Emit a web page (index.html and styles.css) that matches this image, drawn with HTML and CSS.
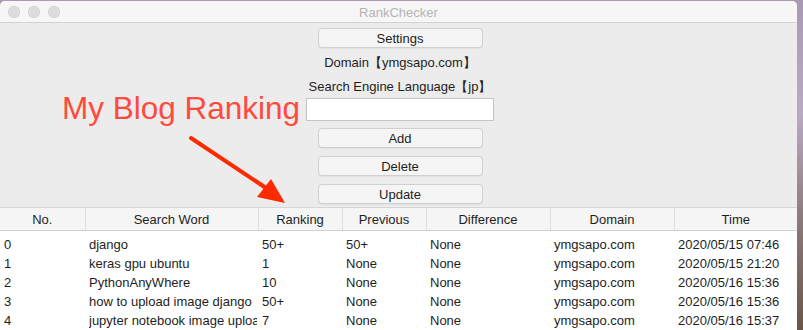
FILE: index.html
```html
<!DOCTYPE html>
<html>
<head>
<meta charset="utf-8">
<link rel="stylesheet" href="styles.css">
</head>
<body>
<div class="desk">
  <div class="window">
    <div class="titlebar">
      <div class="lights"><span></span><span></span><span></span></div>
      <div class="title">RankChecker</div>
    </div>
    <div class="content">
      <div class="controls">
        <button class="btn">Settings</button>
        <div class="label l1">Domain【ymgsapo.com】</div>
        <div class="label l2">Search Engine Language【jp】</div>
        <input class="entry" type="text">
        <button class="btn">Add</button>
        <button class="btn">Delete</button>
        <button class="btn last">Update</button>
      </div>
      <div class="annot">My Blog Ranking</div>
      <svg class="arrow" width="120" height="80" viewBox="0 0 120 80">
        <line x1="4" y1="4" x2="82" y2="56" stroke="#ff2a00" stroke-width="4" stroke-linecap="round"/>
        <polygon points="98,69 70,63 84,45" fill="#ff2a00"/>
      </svg>
      <div class="tablewrap">
        <table class="grid">
          <colgroup>
            <col class="c85"><col class="c173"><col class="c84"><col class="c84"><col class="c124"><col class="c124"><col class="c123">
          </colgroup>
          <thead>
            <tr><th>No.</th><th>Search Word</th><th>Ranking</th><th>Previous</th><th>Difference</th><th>Domain</th><th>Time</th></tr>
          </thead>
          <tbody>
            <tr class="first"><td>0</td><td>django</td><td>50+</td><td>50+</td><td>None</td><td>ymgsapo.com</td><td>2020/05/15 07:46</td></tr>
            <tr><td>1</td><td>keras gpu ubuntu</td><td>1</td><td>None</td><td>None</td><td>ymgsapo.com</td><td>2020/05/15 21:20</td></tr>
            <tr><td>2</td><td>PythonAnyWhere</td><td>10</td><td>None</td><td>None</td><td>ymgsapo.com</td><td>2020/05/16 15:36</td></tr>
            <tr><td>3</td><td><div class="clip">how to upload image django</div></td><td>50+</td><td>None</td><td>None</td><td>ymgsapo.com</td><td>2020/05/16 15:36</td></tr>
            <tr><td>4</td><td><div class="clip">jupyter notebook image upload</div></td><td>7</td><td>None</td><td>None</td><td>ymgsapo.com</td><td>2020/05/16 15:37</td></tr>
          </tbody>
        </table>
      </div>
    </div>
  </div>
</div>
</body>
</html>
```
FILE: styles.css
```css
html, body {
  margin: 0;
  padding: 0;
}
body {
  width: 803px;
  height: 330px;
  overflow: hidden;
  font-family: "Liberation Sans", Arial, sans-serif;
  font-size: 13px;
  color: #1e1e1e;
}
.desk {
  width: 803px;
  height: 330px;
  background: linear-gradient(180deg, #a999b4 0%, #b9a9c2 35%, #8d7c7e 65%, #6b5548 100%);
  padding-top: 1px;
  box-sizing: border-box;
}
.window {
  width: 797px;
  height: 329px;
  background: #ececec;
  border-radius: 5px 5px 0 0;
  overflow: hidden;
  display: flex;
  flex-direction: column;
}
.titlebar {
  height: 21px;
  background: #f6f6f6;
  border-bottom: 1px solid #d2d2d2;
  position: relative;
  display: flex;
  align-items: center;
  justify-content: center;
  flex-shrink: 0;
}
.lights {
  position: absolute;
  left: 8px;
  top: 5px;
  display: flex;
  gap: 8px;
}
.lights span {
  width: 12px;
  height: 12px;
  border-radius: 50%;
  background: #dcdcdc;
  box-shadow: inset 0 0 0 0.5px #cfcfcf;
}
.title {
  color: #b4b4b4;
  font-size: 13px;
  padding-top: 1px;
}
.content {
  position: relative;
  flex: 1;
  display: flex;
  flex-direction: column;
}
.controls {
  display: flex;
  flex-direction: column;
  align-items: center;
  padding-top: 5px;
  padding-left: 3px;
  flex-shrink: 0;
}
.btn {
  width: 165px;
  height: 20px;
  margin: 0 0 8px 0;
  padding: 0;
  border: 1px solid #d0d0d0;
  border-radius: 4px;
  background: #f5f5f5;
  font-family: inherit;
  font-size: 13px;
  color: #1e1e1e;
  box-shadow: 0 0.5px 0 rgba(0,0,0,0.08);
}
.btn.last {
  margin-bottom: 3px;
}
.label {
  height: 16px;
  line-height: 16px;
}
.l1 {
  margin-top: -1px;
  margin-bottom: 8px;
}
.l2 {
  margin-bottom: 3px;
}
.entry {
  width: 188px;
  height: 23px;
  box-sizing: border-box;
  border: 1px solid #c4c4c4;
  background: #ffffff;
  margin: 0 0 7px 0;
  padding: 0;
}
.annot {
  position: absolute;
  left: 62px;
  top: 67px;
  font-size: 31.5px;
  color: #ff4a3d;
}
.arrow {
  position: absolute;
  left: 187px;
  top: 111px;
}
.tablewrap {
  flex: 1;
  background: #ffffff;
}
.grid {
  border-collapse: collapse;
  table-layout: fixed;
  width: 797px;
}
.c85 { width: 85px; }
.c173 { width: 173px; }
.c84 { width: 84px; }
.c124 { width: 124px; }
.c123 { width: 123px; }
.grid th {
  height: 22px;
  padding: 0;
  font-weight: normal;
  text-align: center;
  background: #f5f5f5;
  border-top: 1px solid #d6d6d6;
  border-bottom: 1px solid #d2d2d2;
  border-left: 1px solid #e0e0e0;
  color: #1e1e1e;
}
.grid th:first-child {
  border-left: none;
}
.grid td {
  height: 19px;
  padding: 0 0 0 4px;
  white-space: nowrap;
  overflow: hidden;
  vertical-align: middle;
}
.grid tr.first td {
  height: 23px;
  padding-top: 4px;
  box-sizing: border-box;
}
.clip {
  width: 168px;
  overflow: hidden;
  white-space: nowrap;
}
```
